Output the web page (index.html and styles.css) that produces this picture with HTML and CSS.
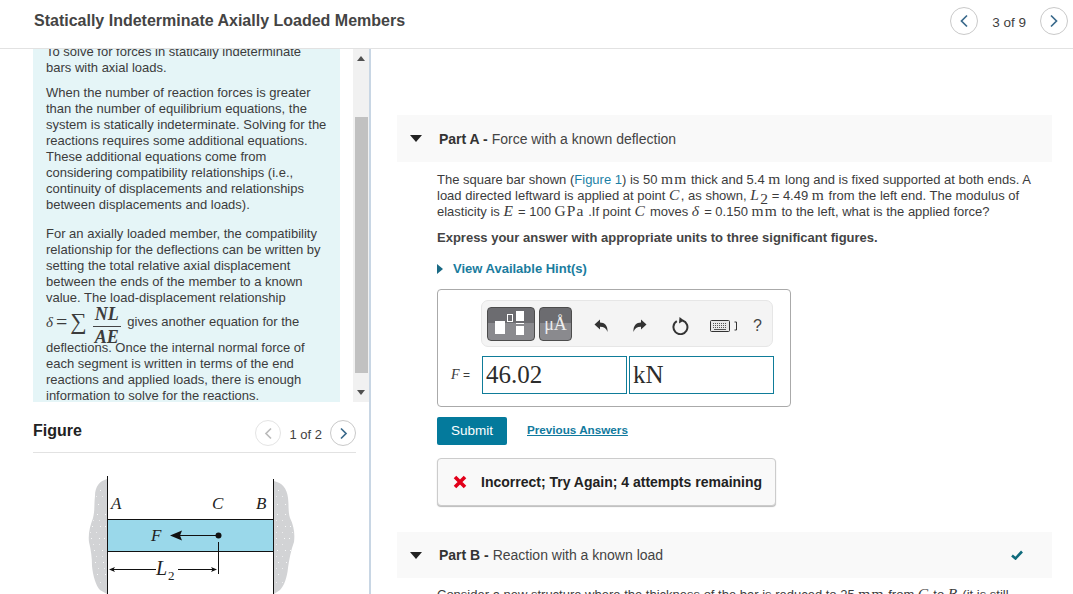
FILE: index.html
```html
<!DOCTYPE html>
<html lang="en">
<head>
<meta charset="utf-8">
<title>Statically Indeterminate Axially Loaded Members</title>
<link rel="stylesheet" href="styles.css">
</head>
<body>
<header class="top">
  <h1 class="title">Statically Indeterminate Axially Loaded Members</h1>
  <nav class="pager top-pager">
    <button class="circle"><svg width="10" height="14" viewBox="0 0 10 14"><path d="M8 1.5 2.5 7 8 12.5" class="chev"/></svg></button>
    <span class="pager-text">3 of 9</span>
    <button class="circle"><svg width="10" height="14" viewBox="0 0 10 14"><path d="M2 1.5 7.5 7 2 12.5" class="chev"/></svg></button>
  </nav>
</header>
<main class="layout">
  <aside class="left">
    <div class="scroller">
      <div class="intro">
        <div class="intro-inner">
          <p>To solve for forces in statically indeterminate<br>bars with axial loads.</p>
          <p>When the number of reaction forces is greater<br>than the number of equilibrium equations, the<br>system is statically indeterminate. Solving for the<br>reactions requires some additional equations.<br>These additional equations come from<br>considering compatibility relationships (i.e.,<br>continuity of displacements and relationships<br>between displacements and loads).</p>
          <p>For an axially loaded member, the compatibility<br>relationship for the deflections can be written by<br>setting the total relative axial displacement<br>between the ends of the member to a known<br>value. The load-displacement relationship<br>
          <span class="eq"><i class="m delta">δ</i><span class="m eq-op">=</span><span class="m sum">∑</span><span class="frac"><i class="m num">NL</i><i class="m den">AE</i></span></span> gives another equation for the<br>deflections. Once the internal normal force of<br>each segment is written in terms of the end<br>reactions and applied loads, there is enough<br>information to solve for the reactions.</p>
        </div>
      </div>
      <div class="scrollbar">
        <svg class="sb-arrow" width="8" height="5" viewBox="0 0 8 5"><path d="M4 0 8 5H0z"/></svg>
        <div class="sb-track"><div class="sb-thumb"></div></div>
        <svg class="sb-arrow" width="8" height="5" viewBox="0 0 8 5"><path d="M0 0H8L4 5z"/></svg>
      </div>
    </div>
    <section class="figure">
      <div class="figure-head">
        <h2 class="figure-title">Figure</h2>
        <nav class="pager">
          <button class="circle small off"><svg width="9" height="13" viewBox="0 0 9 13"><path d="M7 1.5 2 6.5 7 11.5" class="chev"/></svg></button>
          <span class="pager-text">1 of 2</span>
          <button class="circle small"><svg width="9" height="13" viewBox="0 0 9 13"><path d="M2 1.5 7 6.5 2 11.5" class="chev"/></svg></button>
        </nav>
      </div>
      <svg class="diagram" width="208" height="118" viewBox="0 0 208 118">
        <path class="rock" d="M19 3C12 5 7 10 7 20 6 28 7 34 5 42 2 50 0 58 1 66 3 74 4 82 4 90 5 100 8 110 12 114L19 118Z"/>
        <path class="rock" d="M186 5C194 7 199 12 200 22 201 30 200 36 202 42 206 50 207 58 206 66 203 74 201 84 200 92 199 102 196 110 192 114L186 118Z"/>
        <path class="speck" d="M4 50.500H18M3 62.500H18M6 74.500H18M7 86.500H18M9 98.500H18M10 28.500H18M9 38.500H18M12 14.500H18M190 14.500H199M189 28.500H199M189 38.500H200M189 50.500H205M188 62.500H205M189 74.500H203M190 86.500H200M190 98.500H198"/>
        <path class="speck s2" d="M8 20.500H18M5 44.500H18M2 56.500H18M5 68.500H18M8 80.500H18M10 92.500H18M12 106.500H18M188 20.500H198M188 44.500H203M188 56.500H205M188 68.500H204M188 80.500H201M188 92.500H199M188 106.500H195"/>
        <rect class="bar" x="19.500" y="43.500" width="166" height="32"/>
        <path class="line" d="M19.500 0V118M185.500 3V118"/>
        <path class="thin" d="M88 59.500H130M130.500 66V98M24 93.500H68M90 93.500H126"/>
        <circle cx="130.500" cy="59.500" r="3" class="solid"/>
        <path class="solid" d="M82 59.500 94 54.500 92 59.500 94 64.500Z"/>
        <path class="solid" d="M21 93.500 27 91 25.500 93.500 27 96ZM129 93.500 123 91 124.500 93.500 123 96Z"/>
        <text x="23" y="33" class="lbl">A</text>
        <text x="124" y="33" class="lbl">C</text>
        <text x="168" y="33" class="lbl">B</text>
        <text x="63" y="65" class="lbl">F</text>
        <text x="68" y="99" class="lbl big">L</text>
        <text x="80" y="104" class="lbl sub">2</text>
      </svg>
    </section>
  </aside>
  <section class="right">
    <div class="part-bar part-a">
      <svg class="caret" width="12" height="7" viewBox="0 0 12 7"><path d="M0 0H12L6 7z"/></svg>
      <div class="part-title"><b>Part A - </b>Force with a known deflection</div>
    </div>
    <div class="part-body">
      <p class="problem">The square bar shown (<a class="link">Figure 1</a>) is 50 <span class="m unit">mm</span> thick and 5.4 <span class="m unit">m</span> long and is fixed supported at both ends. A<br>load directed leftward is applied at point <i class="m">C</i>, as shown, <i class="m">L</i><sub class="m">2</sub> = 4.49 <span class="m unit">m</span> from the left end. The modulus of<br>elasticity is <i class="m">E</i> = 100 <span class="m unit">GPa</span> .If point <i class="m">C</i> moves <i class="m">δ</i> = 0.150 <span class="m unit">mm</span> to the left, what is the applied force?</p>
      <p class="express">Express your answer with appropriate units to three significant figures.</p>
      <div class="hint"><svg width="6" height="10" viewBox="0 0 6 10"><path d="M0 0 6 5 0 10z"/></svg><span>View Available Hint(s)</span></div>
      <div class="answer">
        <div class="toolbar">
          <div class="tool-btn tb-wide">
            <svg width="47" height="32" viewBox="0 0 47 32">
              <rect x="7" y="13" width="10" height="13" fill="#fff"/>
              <rect x="19.500" y="6.500" width="5" height="7" fill="none" stroke="#fff"/>
              <rect x="28" y="3" width="8" height="10" fill="#fff"/>
              <rect x="28" y="15" width="8" height="1" fill="#fff"/>
              <rect x="28" y="18" width="8" height="9" fill="#fff"/>
            </svg>
          </div>
          <div class="tool-btn tb-unit"><span>μÅ</span></div>
          <div class="tools">
            <svg width="16" height="16" viewBox="0 0 16 16"><path class="ink" d="M1.500 6.500 7 1.500V4.500C11.500 4.500 15 7.500 14.500 14 13.500 10.500 11 8.800 7 8.800V11.500Z"/></svg>
            <svg width="16" height="16" viewBox="0 0 16 16"><path class="ink" d="M14.500 6.500 9 1.500V4.500C4.500 4.500 1 7.500 1.500 14 2.500 10.500 5 8.800 9 8.800V11.500Z"/></svg>
            <svg width="18" height="18" viewBox="0 0 18 18"><path class="ring" d="M5.800 4.200A7 7 0 1 0 11.500 3.500"/><path class="ink" d="M8.500 0 13 3.600 8 6.500Z"/></svg>
            <svg class="kbd" width="28" height="12" viewBox="0 0 28 12"><rect x=".5" y=".5" width="19" height="11" rx="1" fill="#e8e8e8" stroke="#333"/><path d="M3 3.500H17M3 5.500H17M3 7.500H17" stroke="#555" stroke-dasharray="1 1"/><path d="M4 9.500H16" stroke="#555"/><path d="M24.500 2H26.500V10H24.500" fill="none" stroke="#333"/></svg>
            <span class="help">?</span>
          </div>
        </div>
        <div class="answer-row">
          <span class="var"><i class="m">F</i> =</span>
          <div class="field">46.02</div>
          <div class="field">kN</div>
        </div>
      </div>
      <div class="actions">
        <button class="submit">Submit</button>
        <a class="prev">Previous Answers</a>
      </div>
      <div class="feedback">
        <svg width="14" height="14" viewBox="0 0 14 14"><path d="M2 2 12 12M12 2 2 12" stroke="#e2001a" stroke-width="3.600" fill="none"/></svg>
        <span>Incorrect; Try Again; 4 attempts remaining</span>
      </div>
    </div>
    <div class="part-bar part-b">
      <svg class="caret" width="12" height="7" viewBox="0 0 12 7"><path d="M0 0H12L6 7z"/></svg>
      <div class="part-title"><b>Part B - </b>Reaction with a known load</div>
      <svg class="check" width="12" height="10" viewBox="0 0 12 10"><path d="M1 5.500 4.500 8.500 11 1.500" fill="none" stroke="#0f6b7c" stroke-width="2.600"/></svg>
    </div>
    <p class="problem next">Consider a new structure where the thickness of the bar is reduced to 25 <span class="m unit">mm</span> from <i class="m">C</i> to <i class="m">B</i> (it is still</p>
  </section>
</main>
</body>
</html>
```
FILE: styles.css
```css
* { box-sizing: border-box; }
html, body { margin: 0; height: 594px; overflow: hidden; }
body { background: #fff; color: #3c3c3c; font-family: "Liberation Sans", Arial, sans-serif; font-size: 13px; line-height: 16px; }
p { margin: 0; }
button { font: inherit; padding: 0; background: #fff; }
.m { font-family: "Liberation Serif", serif; }

.top { height: 49px; display: flex; align-items: center; justify-content: space-between; padding: 0 5px 7px 34px; border-bottom: 1px solid #e2e2e2; }
.title { margin: 0; font-size: 16px; font-weight: 700; color: #444; }
.pager { display: flex; align-items: center; }
.top-pager { gap: 14px; }
.pager-text { color: #3f3f3f; font-size: 13px; padding-top: 4px; }
.top-pager .pager-text { font-size: 13.500px; }
.circle { width: 28px; height: 28px; border: 1px solid #c9c9c9; border-radius: 50%; display: flex; align-items: center; justify-content: center; }
.circle.small { width: 26px; height: 26px; }
.circle.off { border-color: #e4e4e4; }
.chev { fill: none; stroke: #3a6a8c; stroke-width: 1.700; }
.off .chev { stroke: #bbb; }

.layout { display: flex; height: 545px; }
.left { width: 371px; flex: none; border-right: 2px solid #c8d6e4; padding-left: 33px; }
.scroller { display: flex; height: 353px; }
.intro { width: 307px; height: 353px; overflow: hidden; background: #e5f5f7; padding: 0 13px; }
.intro-inner { margin-top: -5px; }
.intro-inner p { margin-bottom: 9px; white-space: nowrap; }
.intro-inner p:nth-child(2) { margin-bottom: 13px; }
.eq { display: inline-flex; align-items: center; height: 32px; vertical-align: middle; margin: 0 3px 2px 0; }
.delta { font-size: 15px; }
.eq-op { margin: 0 3px; font-size: 20px; }
.sum { font-size: 23px; }
.frac { display: inline-flex; flex-direction: column; align-items: center; margin: 2px 0 0 6px; font-weight: 700; font-size: 18px; }
.num { border-bottom: 1px solid #444; padding: 0 2px; line-height: 24px; }
.den { line-height: 16px; padding-top: 2px; }
.scrollbar { width: 16px; margin-left: 13px; background: #f1f1f1; display: flex; flex-direction: column; align-items: center; justify-content: space-between; padding: 7px 0; }
.sb-arrow { fill: #505050; flex: none; }
.sb-track { flex: 1; width: 100%; padding: 56px 1px 17px 2px; }
.sb-thumb { height: 100%; background: #c1c1c1; }

.figure { width: 323px; }
.figure-head { height: 51px; border-bottom: 1px solid #e2e2e2; display: flex; justify-content: space-between; align-items: center; padding-top: 8px; }
.figure-title { margin: 0; font-size: 16px; font-weight: 700; color: #222; }
.figure .pager { gap: 8px; margin-top: 4px; }
.diagram { display: block; margin: 23px 0 0 55px; }
.rock { fill: #d2d3d5; }
.speck { stroke: #fff; stroke-width: 1; fill: none; stroke-dasharray: 1 7 1 4; opacity: .85; }
.s2 { stroke-dasharray: 1 5 1 9; opacity: .6; }
.bar { fill: #9ad8ea; stroke: #111; stroke-width: 1; }
.line { stroke: #111; stroke-width: 1; fill: none; }
.thin { stroke: #111; stroke-width: 1; fill: none; }
.solid { fill: #111; }
.lbl { font-family: "Liberation Serif", serif; font-style: italic; font-size: 17px; fill: #222; }
.big { font-size: 20px; }
.sub { font-style: normal; font-size: 13px; }

.right { flex: 1; padding: 66px 21px 0 26px; min-width: 0; }
.part-bar { background: #f9f9f9; display: flex; align-items: center; padding-left: 13px; padding-right: 29px; }
.part-a { height: 47px; }
.part-b { height: 46px; margin-top: 26px; }
.caret { fill: #222; flex: none; }
.part-title { margin-left: 17px; font-size: 14px; color: #444; }
.part-title b { color: #333; }
.check { margin-left: auto; }
.part-body { padding: 10px 0 0 40px; }
.problem { white-space: nowrap; font-size: 13px; }
.problem .m { font-size: 15.500px; line-height: 0; }
.problem i.m { letter-spacing: 1.500px; }
.problem .unit { font-size: 15.500px; letter-spacing: 1.100px; }
.problem sub { font-size: 11px; line-height: 0; }
.link { color: #1b7fa6; }
.express { margin-top: 10px; font-weight: 700; font-size: 13px; color: #444; }
.hint { margin-top: 15px; display: flex; align-items: center; gap: 10px; font-weight: 700; font-size: 13px; color: #1a7c9e; }
.hint svg { fill: #1a6a85; }
.answer { width: 354px; height: 118px; margin-top: 12px; border: 1px solid #aaa; border-radius: 4px; padding: 10px 16px 0 43px; }
.toolbar { width: 292px; height: 47px; background: #f4f4f4; border: 1px solid #e6e6e6; border-radius: 7px; display: flex; align-items: center; padding: 0 5px; gap: 4px; }
.tool-btn { height: 34px; border-radius: 4px; border: 1px solid #4c4c4c; background: linear-gradient(#6c6c70 0 47%, #8a8a8e 47%); }
.tb-wide { width: 48px; }
.tb-wide svg { display: block; }
.tb-unit { width: 33px; color: #eee; font-family: "Liberation Serif", serif; font-size: 18px; display: flex; align-items: center; justify-content: center; }
.tools { flex: 1; display: flex; align-items: center; gap: 23px; padding: 5px 0 0 17px; }
.kbd { margin-left: -2px; }
.ink { fill: #333; }
.ring { fill: none; stroke: #333; stroke-width: 2; }
.help { font-size: 16px; color: #444; margin-left: -8px; }
.answer-row { display: flex; align-items: center; gap: 2px; margin-top: 9px; margin-left: -32px; }
.var { width: 31px; padding-left: 2px; font-size: 12px; white-space: nowrap; }
.var .m { font-size: 14px; }
.field { width: 145px; height: 38px; border: 1px solid #0f7c99; font-family: "Liberation Serif", serif; font-size: 25px; line-height: 36px; padding-left: 3px; color: #2c2c2c; }
.actions { display: flex; align-items: flex-start; gap: 20px; margin-top: 10px; }
.submit { width: 70px; height: 28px; border: 0; border-radius: 2px; background: #047a9c; color: #fff; font-size: 13.500px; }
.prev { color: #117a9e; font-weight: 700; font-size: 11.700px; text-decoration: underline; margin-top: 5px; }
.feedback { width: 339px; height: 48px; margin-top: 13px; border: 1px solid #ccc; border-radius: 4px; background: #f9f9f9; box-shadow: 0 1px 1px #bbb; display: flex; align-items: center; gap: 14px; padding-left: 15px; font-weight: 700; font-size: 14px; color: #222; }
.next { margin: 9px 0 0 40px; }
```
